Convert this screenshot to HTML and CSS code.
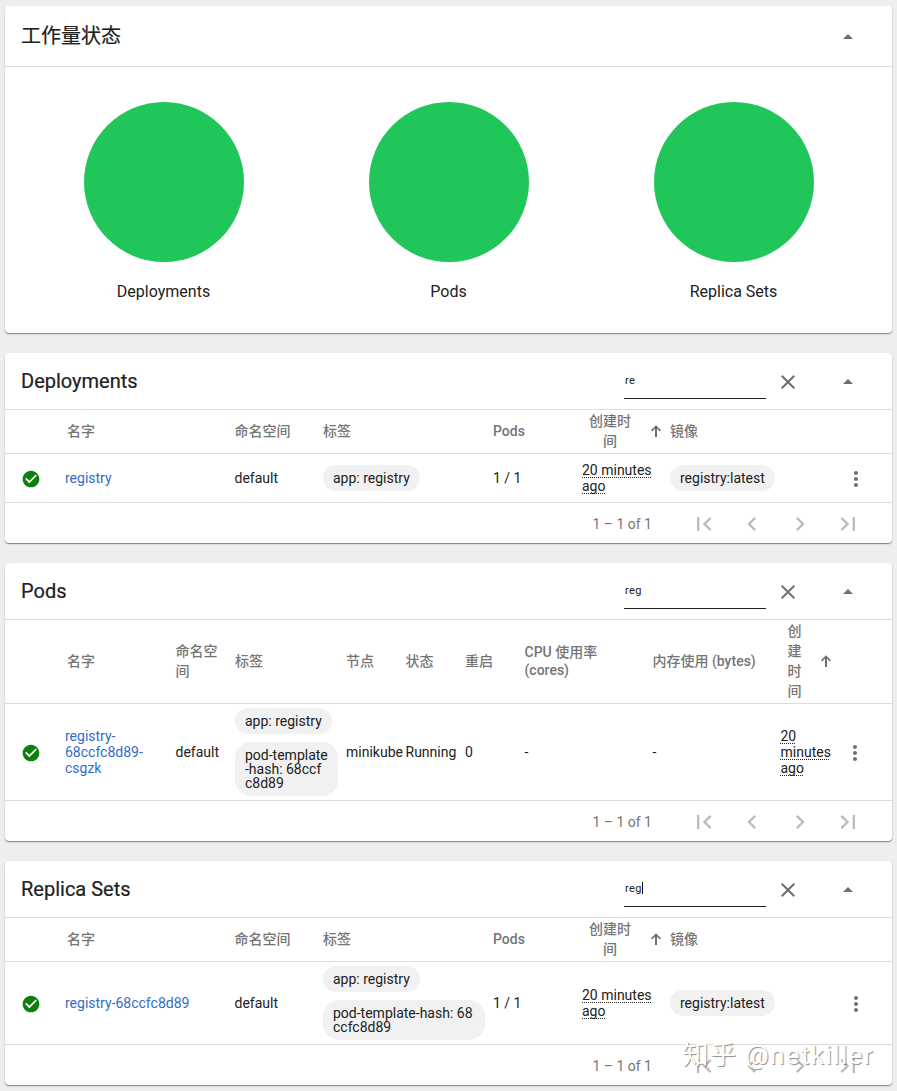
FILE: index.html
```html
<!DOCTYPE html>
<html lang="zh-CN">

<head>
    <meta charset="UTF-8">
    <title>工作量</title>
    <meta name="viewport" content="width=device-width, initial-scale=1.0">
    <link rel="stylesheet" href="styles.css">
</head>

<body>
    <!-- shared icons -->
    <svg class="sprite">
        <symbol id="drop-up" viewBox="0 0 24 24"><path d="M7 14l5-5 5 5z"/></symbol>
        <symbol id="close" viewBox="0 0 24 24"><path d="M19 6.41L17.59 5 12 10.59 6.41 5 5 6.41 10.59 12 5 17.59 6.41 19 12 13.41 17.59 19 19 17.59 13.41 12z"/></symbol>
        <symbol id="check" viewBox="0 0 24 24"><path d="M12 2C6.48 2 2 6.48 2 12s4.48 10 10 10 10-4.48 10-10S17.52 2 12 2zm-2 15l-5-5 1.41-1.41L10 14.17l7.59-7.59L19 8l-9 9z"/></symbol>
        <symbol id="more" viewBox="0 0 24 24"><path d="M12 8c1.1 0 2-.9 2-2s-.9-2-2-2-2 .9-2 2 .9 2 2 2zm0 2c-1.1 0-2 .9-2 2s.9 2 2 2 2-.9 2-2-.9-2-2-2zm0 6c-1.1 0-2 .9-2 2s.9 2 2 2 2-.9 2-2-.9-2-2-2z"/></symbol>
        <symbol id="first" viewBox="0 0 24 24"><path d="M18.41 16.59L13.82 12l4.59-4.59L17 6l-6 6 6 6zM6 6h2v12H6z"/></symbol>
        <symbol id="prev" viewBox="0 0 24 24"><path d="M15.41 7.41L14 6l-6 6 6 6 1.41-1.41L10.83 12z"/></symbol>
        <symbol id="next" viewBox="0 0 24 24"><path d="M10 6L8.59 7.41 13.17 12l-4.58 4.59L10 18l6-6z"/></symbol>
        <symbol id="last" viewBox="0 0 24 24"><path d="M5.59 7.41L10.18 12l-4.59 4.59L7 18l6-6-6-6zM16 6h2v12h-2z"/></symbol>
        <symbol id="sort" viewBox="0 0 12 12"><path d="M5 12V3.6L2.2 6.4 1 5.2 6 .3l5 4.9-1.2 1.2L7 3.6V12z"/></symbol>
    </svg>

    <section class="card">
        <header class="card-header tall">
            <h2>工作量状态</h2>
            <svg class="icon toggle"><use href="#drop-up"/></svg>
        </header>
        <div class="charts">
            <div class="chart"><div class="pie"></div>Deployments</div>
            <div class="chart"><div class="pie"></div>Pods</div>
            <div class="chart"><div class="pie"></div>Replica Sets</div>
        </div>
    </section>

    <section class="card">
        <header class="card-header">
            <h2>Deployments</h2>
            <div class="filter">re</div>
            <svg class="icon clear"><use href="#close"/></svg>
            <svg class="icon toggle"><use href="#drop-up"/></svg>
        </header>
        <div class="row head">
            <div></div>
            <div class="name">名字</div>
            <div>命名空间</div>
            <div>标签</div>
            <div>Pods</div>
            <div class="sort"><span>创建时间</span><svg><use href="#sort"/></svg></div>
            <div>镜像</div>
            <div></div>
        </div>
        <div class="row">
            <svg class="status"><use href="#check"/></svg>
            <div><a href="#">registry</a></div>
            <div>default</div>
            <div class="chips"><span class="chip">app: registry</span></div>
            <div>1 / 1</div>
            <div><span class="time">20 minutes ago</span></div>
            <div class="chips"><span class="chip">registry:latest</span></div>
            <svg class="icon menu"><use href="#more"/></svg>
        </div>
        <footer class="pager">
            <span>1 – 1 of 1</span>
            <svg><use href="#first"/></svg>
            <svg><use href="#prev"/></svg>
            <svg><use href="#next"/></svg>
            <svg><use href="#last"/></svg>
        </footer>
    </section>

    <section class="card">
        <header class="card-header">
            <h2>Pods</h2>
            <div class="filter">reg</div>
            <svg class="icon clear"><use href="#close"/></svg>
            <svg class="icon toggle"><use href="#drop-up"/></svg>
        </header>
        <div class="row pods head">
            <div></div>
            <div class="name">名字</div>
            <div class="ns">命名空间</div>
            <div>标签</div>
            <div>节点</div>
            <div>状态</div>
            <div>重启</div>
            <div class="cpu">CPU 使用率 (cores)</div>
            <div>内存使用 (bytes)</div>
            <div class="sort"><span>创建时间</span><svg><use href="#sort"/></svg></div>
            <div></div>
        </div>
        <div class="row pods">
            <svg class="status"><use href="#check"/></svg>
            <div class="pod-name"><a href="#">registry-68ccfc8d89-csgzk</a></div>
            <div>default</div>
            <div class="chips"><span class="chip">app: registry</span><span class="chip">pod-template-hash: 68ccfc8d89</span></div>
            <div class="nowrap">minikube</div>
            <div class="nowrap">Running</div>
            <div>0</div>
            <div>-</div>
            <div>-</div>
            <div><span class="time">20 minutes ago</span></div>
            <svg class="icon menu"><use href="#more"/></svg>
        </div>
        <footer class="pager">
            <span>1 – 1 of 1</span>
            <svg><use href="#first"/></svg>
            <svg><use href="#prev"/></svg>
            <svg><use href="#next"/></svg>
            <svg><use href="#last"/></svg>
        </footer>
    </section>

    <section class="card">
        <header class="card-header">
            <h2>Replica Sets</h2>
            <div class="filter focused">reg</div>
            <svg class="icon clear"><use href="#close"/></svg>
            <svg class="icon toggle"><use href="#drop-up"/></svg>
        </header>
        <div class="row head">
            <div></div>
            <div class="name">名字</div>
            <div>命名空间</div>
            <div>标签</div>
            <div>Pods</div>
            <div class="sort"><span>创建时间</span><svg><use href="#sort"/></svg></div>
            <div>镜像</div>
            <div></div>
        </div>
        <div class="row">
            <svg class="status"><use href="#check"/></svg>
            <div><a href="#">registry-68ccfc8d89</a></div>
            <div>default</div>
            <div class="chips"><span class="chip">app: registry</span><span class="chip">pod-template-hash: 68ccfc8d89</span></div>
            <div>1 / 1</div>
            <div><span class="time">20 minutes ago</span></div>
            <div class="chips"><span class="chip">registry:latest</span></div>
            <svg class="icon menu"><use href="#more"/></svg>
        </div>
        <footer class="pager">
            <span>1 – 1 of 1</span>
            <svg><use href="#first"/></svg>
            <svg><use href="#prev"/></svg>
            <svg><use href="#next"/></svg>
            <svg><use href="#last"/></svg>
        </footer>
        <div class="watermark">知乎 @netkiller</div>
    </section>
</body>
</html>
```
FILE: styles.css
```css
* {
    box-sizing: border-box;
}

body {
    margin: 0;
    padding: 6px 5px;
    background: #eceeef;
    color: #212121;
    font-family: Roboto, "Noto Sans CJK SC", sans-serif;
    font-size: 14px;
    line-height: 16px;
}

.sprite {
    display: none;
}

.card {
    position: relative;
    margin-bottom: 20px;
    background: #fff;
    border-radius: 4px;
    box-shadow: 0 1px 1px rgba(0, 0, 0, .42), 0 1px 3px rgba(0, 0, 0, .08);
}

.card:last-child {
    margin-bottom: 0;
}

.card-header {
    display: flex;
    align-items: center;
    height: 57px;
    padding: 0 32px 0 16px;
    border-bottom: 1px solid #dcdcdc;
}

.card-header.tall {
    height: 61px;
}

h2 {
    flex: 1;
    margin: 0;
    font-size: 20px;
    font-weight: 400;
    line-height: 24px;
    -webkit-text-stroke: .2px;
}

.icon {
    width: 24px;
    height: 24px;
    fill: #6f6f6f;
}

.clear {
    margin: 2px 36px 0 10px;
}

.toggle {
    margin-top: 2px;
}

.filter {
    width: 142px;
    height: 28px;
    margin-top: 7px;
    padding-left: 1px;
    border-bottom: 1px solid #212121;
    font-size: 11px;
    letter-spacing: .4px;
    line-height: 20px;
}

/* text cursor */
.focused::after {
    content: "";
    display: inline-block;
    height: 12px;
    border-left: 1px solid #000;
    vertical-align: -2px;
}

.charts {
    display: flex;
    height: 266px;
    padding: 35px 16px 0;
}

.chart {
    flex: 1;
    font-size: 16px;
    line-height: 20px;
    text-align: center;
}

.pie {
    width: 160px;
    height: 160px;
    margin: 0 auto 20px;
    border-radius: 50%;
    background: #20c65a;
}

.row {
    display: grid;
    grid-template-columns: 44px 169.5px 88.5px 170px 89px 88px 174px 24px;
    align-items: center;
    padding: 4px 0 4px 16px;
    min-height: 49px;
    border-bottom: 1px solid #dcdcdc;
}

.pods {
    grid-template-columns: 44px 110.5px 59.5px 111px 59.5px 59.5px 59.5px 128px 128px 62.5px 24px;
}

.head {
    min-height: 44px;
    padding-top: 1px;
    padding-bottom: 2px;
    color: #757575;
    font-weight: 500;
    line-height: 20px;
}

.name {
    padding-left: 2px;
}

.ns {
    width: 44px;
}

.cpu {
    width: 80px;
    line-height: 18px;
}

.sort {
    display: flex;
    align-items: center;
    justify-content: space-between;
    padding: 0 8px 0 7px;
    text-align: center;
}

.pods .sort {
    padding-right: 11px;
}

.sort span {
    width: 42px;
}

.pods .sort span {
    width: 14px;
}

.sort svg {
    width: 12px;
    height: 12px;
    fill: #6f6f6f;
}

.status {
    width: 20px;
    height: 20px;
    margin-top: 2px;
    fill: #0b800f;
}

a {
    color: #326cca;
    text-decoration: none;
}

.pod-name {
    width: 84px;
}

.nowrap {
    white-space: nowrap;
}

.chips {
    display: flex;
    flex-direction: column;
    align-items: flex-start;
    gap: 8px;
}

.chip {
    max-width: 162px;
    padding: 6px 10px;
    border-radius: 16px;
    background: #f1f1f1;
    line-height: 14px;
    word-break: break-all;
}

.pods .chip {
    max-width: 103px;
}

.time {
    text-decoration: underline dotted 1px;
    text-decoration-skip-ink: none;
    text-underline-offset: 2px;
}

.menu {
    margin-top: 2px;
}

.pager {
    display: flex;
    align-items: center;
    justify-content: flex-end;
    gap: 20px;
    height: 40px;
    padding: 1px 30px 0 0;
    color: #757575;
}

.pager span {
    margin-right: 18px;
}

.pager svg {
    width: 28px;
    height: 28px;
    fill: #bcbcbc;
}

.watermark {
    position: absolute;
    right: 18px;
    bottom: 15px;
    color: #fff;
    font-size: 26px;
    letter-spacing: 1.4px;
    line-height: 30px;
    text-shadow: 1px 1px 1px rgba(0, 0, 0, .45);
}
```
